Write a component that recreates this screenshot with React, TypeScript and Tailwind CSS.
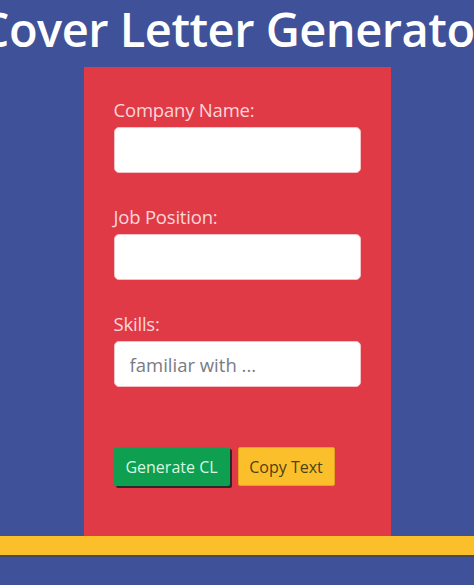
import React, { useState } from 'react';

const fields = [
  { id: 'company', label: 'Company Name:', placeholder: '' },
  { id: 'position', label: 'Job Position:', placeholder: '' },
  { id: 'skills', label: 'Skills:', placeholder: 'familiar with ...' },
];

const App: React.FC = () => {
  const [values, setValues] = useState<Record<string, string>>({});

  return (
    <div
      className="min-h-screen w-full overflow-hidden bg-[#3f5199] flex flex-col"
      style={{ fontFamily: "'Open Sans', 'Noto Sans', sans-serif" }}
    >
      <h1 className="h-[67px] flex justify-center whitespace-nowrap text-[47px] leading-[58px] font-semibold text-white tracking-[-0.5px]">
        Cover Letter Generator
      </h1>

      <main className="flex justify-center">
        <div className="w-[307px] h-[469px] bg-[#e03a47] px-[30px] pt-[31px] flex flex-col">
          {fields.map((f) => (
            <div key={f.id} className="mb-[32px]">
              <label htmlFor={f.id} className="block text-[18.5px] leading-[24px] tracking-[-0.2px] text-[#fcd6d9]">
                {f.label}
              </label>
              <input
                id={f.id}
                type="text"
                placeholder={f.placeholder}
                value={values[f.id] || ''}
                onChange={(e) => setValues({ ...values, [f.id]: e.target.value })}
                className="mt-[5px] w-full h-[46px] rounded-[5px] bg-white border border-[#f3c2c6] px-[15px] text-[18.5px] text-gray-700 placeholder:text-[#7a7a85] outline-none"
              />
            </div>
          ))}

          <div className="flex gap-[8px] mt-[28px]">
            <button className="h-[39px] w-[116px] bg-[#0e9f50] text-[#d9f7e3] text-[16px] rounded-[2px] shadow-[2px_2px_0_#2b2b2b]">
              Generate CL
            </button>
            <button className="h-[39px] w-[97px] bg-[#fbbf2c] text-[#4f4210] text-[16px] border border-[#e8a020] rounded-[2px]">
              Copy Text
            </button>
          </div>
        </div>
      </main>

      <footer className="h-[21px] bg-[#fbbf2c] border-b-2 border-[#4a4a55]" />
    </div>
  );
};

export default App;
